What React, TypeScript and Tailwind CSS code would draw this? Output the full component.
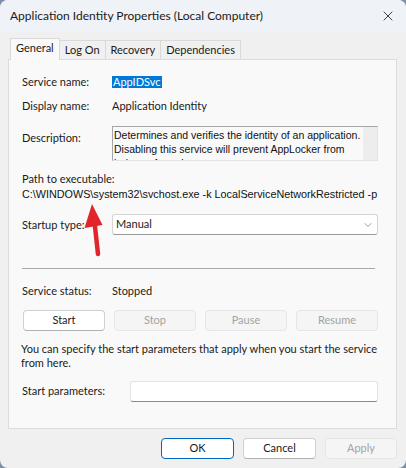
import { ChevronDown, X } from "lucide-react";

const ui = { fontFamily: 'Lato, "Noto Sans", sans-serif' };
const classic = { fontFamily: '"Liberation Sans", Arial, sans-serif' };

const tabs = ["General", "Log On", "Recovery", "Dependencies"];

function Label({ children }: { children: string }) {
  return <div className="w-[90px] shrink-0 text-[11px] leading-[16px] text-[#1a1a1a]">{children}</div>;
}

export default function App() {
  return (
    <div className="w-[406px] h-[468px] bg-[#7f8fa6] overflow-hidden" style={ui}>
      <div className="relative w-full h-full bg-[#f0f0f0] rounded-[8px] overflow-hidden">
        {/* title bar */}
        <div className="h-[32px] bg-[#eff2f7] flex items-center pl-[10px] pr-[10px]">
          <div className="text-[12px] text-[#1a1a1a] flex-1">Application Identity Properties (Local Computer)</div>
          <X size={16} strokeWidth={1.3} className="text-[#222]" />
        </div>

        {/* tabs */}
        <div className="flex items-end pl-[10px] mt-[5px] h-[22px] text-[11px] text-[#1a1a1a]">
          {tabs.map((t, i) =>
            i === 0 ? (
              <div
                key={t}
                className="h-[22px] px-[5px] bg-[#f9f9f9] border border-b-0 border-[#d9d9d9] flex items-center relative z-10 -mb-px pb-[3px]"
              >
                {t}
              </div>
            ) : (
              <div key={t} className="h-[19px] px-[5px] border border-l-0 border-b-0 border-[#d9d9d9] flex items-center">
                {t}
              </div>
            )
          )}
        </div>

        {/* panel */}
        <div className="mx-[8px] mr-[9px] h-[370px] bg-[#f9f9f9] border border-[#dcdcdc] pl-[13px] pr-[18px] pt-[14px]">
          <div className="flex items-center h-[16px]">
            <Label>Service name:</Label>
            <span className="bg-[#0078d7] text-white text-[11px] leading-[12px] h-[12px] px-[1px]">AppIDSvc</span>
          </div>

          <div className="flex items-center h-[16px] mt-[8px]">
            <Label>Display name:</Label>
            <span className="text-[11px] text-[#1a1a1a]">Application Identity</span>
          </div>

          <div className="flex mt-[12px]">
            <div className="pt-[4px]">
              <Label>Description:</Label>
            </div>
            <div className="flex-1 h-[35px] flex border border-[#a6a6a6] border-r-[#e3e3e3] border-b-[#e3e3e3] bg-[#f9f9f9] overflow-hidden">
              <div className="flex-1 pl-[1px] pt-[1px] text-[10.5px] leading-[14px] text-[#111]" style={classic}>
                Determines and verifies the identity of an application. Disabling this service will prevent AppLocker from being enforced.
              </div>
              <div className="w-[14px] shrink-0 bg-[#ededed]" />
            </div>
          </div>

          <div className="mt-[10px] text-[11px] leading-[16px] text-[#1a1a1a]">Path to executable:</div>
          <div className="text-[10.8px] leading-[14px] text-[#111] whitespace-nowrap" style={classic}>
            C:\WINDOWS\system32\svchost.exe -k LocalServiceNetworkRestricted -p
          </div>

          <div className="flex items-center mt-[13px]">
            <Label>Startup type:</Label>
            <div className="flex-1 h-[21px] bg-white border border-[#d5d5d5] border-b-[#9a9a9a] rounded-[3px] flex items-center pl-[3px] pr-[3px] text-[11px] text-[#1a1a1a]">
              <span className="flex-1">Manual</span>
              <ChevronDown size={12} strokeWidth={1.2} className="text-[#555]" />
            </div>
          </div>

          <div className="mt-[33px] h-px bg-[#a8a8a8] mr-[3px]" />

          <div className="flex items-center h-[16px] mt-[14px]">
            <Label>Service status:</Label>
            <span className="text-[11px] text-[#1a1a1a]">Stopped</span>
          </div>

          <div className="grid grid-cols-4 gap-[9px] mt-[11px] pl-[1px] text-[11px]">
            <div className="h-[21px] bg-white border border-[#d0d0d0] border-b-[#b0b0b0] rounded-[4px] flex items-center justify-center text-[#1a1a1a]">
              Start
            </div>
            {["Stop", "Pause", "Resume"].map((b) => (
              <div
                key={b}
                className="h-[21px] bg-[#f5f5f5] border border-[#e5e5e5] rounded-[4px] flex items-center justify-center text-[#a3a3a3]"
              >
                {b}
              </div>
            ))}
          </div>

          <div className="mt-[11px] text-[11px] leading-[14px] text-[#1a1a1a] -ml-[1px]">
            You can specify the start parameters that apply when you start the service from here.
          </div>

          <div className="flex items-center mt-[11px]">
            <div className="w-[108px] shrink-0 text-[11px] text-[#1a1a1a]">Start parameters:</div>
            <div className="flex-1 h-[21px] bg-white border border-[#e3e3e3] border-b-[#8a8a8a] rounded-[3px]" />
          </div>
        </div>

        {/* footer buttons */}
        <div className="flex justify-end gap-[9px] pr-[9px] mt-[9px] text-[11px]">
          <div className="w-[73px] h-[21px] bg-white border border-[#0067c0] rounded-[4px] flex items-center justify-center text-[#1a1a1a]">
            OK
          </div>
          <div className="w-[73px] h-[21px] bg-white border border-[#d0d0d0] border-b-[#b0b0b0] rounded-[4px] flex items-center justify-center text-[#1a1a1a]">
            Cancel
          </div>
          <div className="w-[72px] h-[21px] bg-[#f5f5f5] border border-[#e5e5e5] rounded-[4px] flex items-center justify-center text-[#a3a3a3]">
            Apply
          </div>
        </div>

        {/* annotation arrow */}
        <svg className="absolute left-0 top-0 pointer-events-none" width="406" height="468">
          <line x1="98" y1="254" x2="94.5" y2="222" stroke="#e0262b" strokeWidth="4.5" strokeLinecap="round" />
          <polygon points="92,204 84.5,228 102.5,225" fill="#e0262b" />
        </svg>
      </div>
    </div>
  );
}
